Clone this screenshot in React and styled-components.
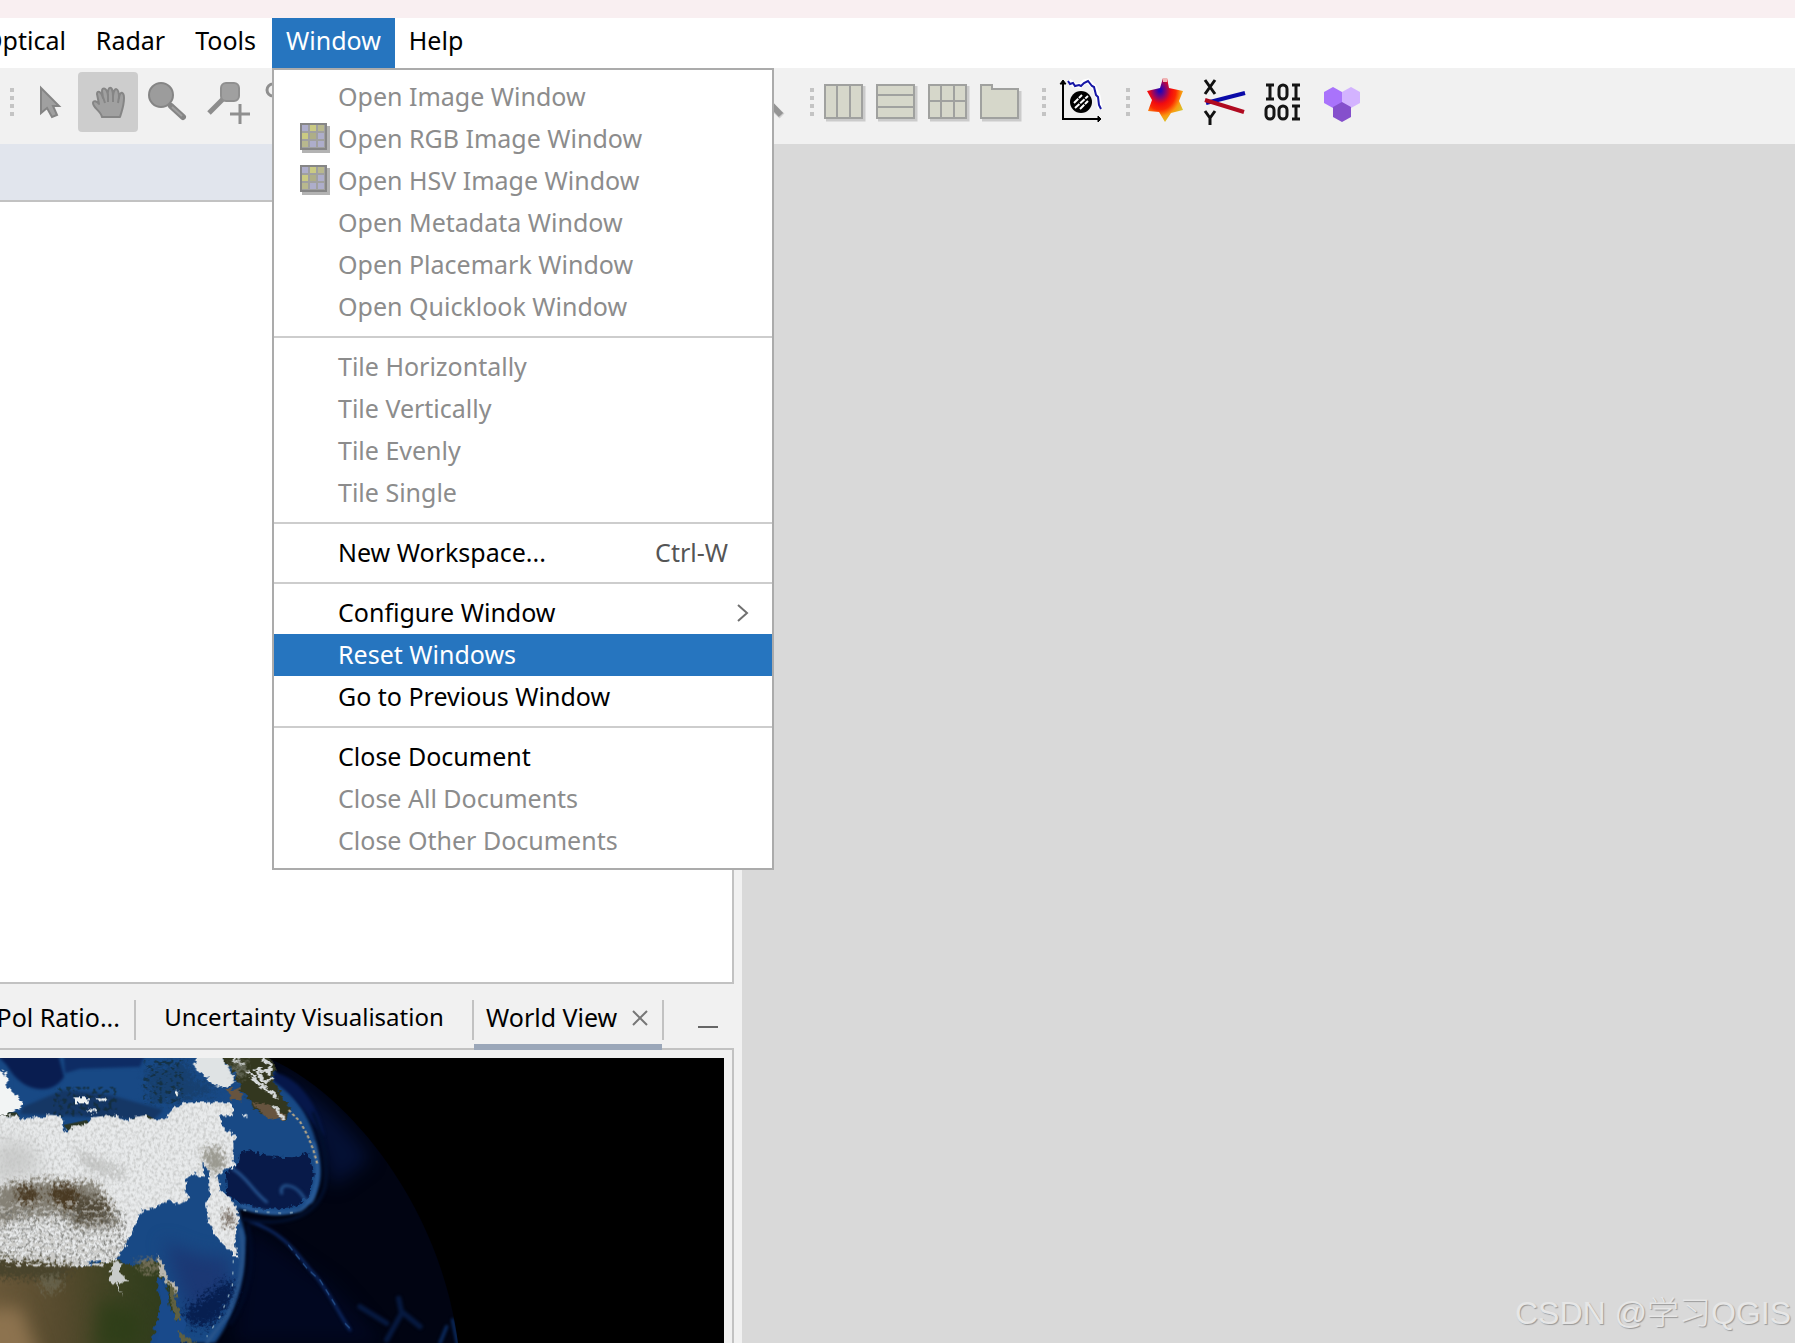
import React from 'react'
import styled, { createGlobalStyle } from 'styled-components'

const GlobalStyle = createGlobalStyle`
  * {
    box-sizing: border-box;
  }

  body {
    margin: 0;
    overflow-x: hidden;
    background: #d9d9d9;
    font-family: 'Noto Sans', 'Noto Sans CJK SC', sans-serif;
    font-size: 25px;
    color: #000000;
  }

  button {
    font: inherit;
    color: inherit;
    border: 0;
    padding: 0;
    background: none;
  }
`

const Page = styled.div`
  display: flex;
  flex-direction: column;
  min-height: 100vh;
`

const TitleStrip = styled.div`
  height: 18px;
  background: #f9eff1;
`

/* ---------- menu bar ---------- */

const MenuBar = styled.nav`
  display: flex;
  height: 50px;
  background: #ffffff;
`

const ScrolledMenus = styled.div`
  display: flex;
  justify-content: flex-end;
  gap: 2px;
  width: 272px;
  padding-right: 2px;
  overflow: hidden;
`

const MenuButton = styled.button`
  flex: none;
  height: 50px;
  padding: 0 14px 6px;
  line-height: 44px;
  background: ${props => props.$open ? '#2675bf' : 'transparent'};
  color: ${props => props.$open ? '#ffffff' : '#000000'};
`

const MenuHolder = styled.div`
  position: relative;
`

const Dropdown = styled.div`
  position: absolute;
  top: 100%;
  left: 0;
  z-index: 10;
  width: 502px;
  padding: 6px 0;
  background: #ffffff;
  border: 2px solid #ababab;
`

const MenuItem = styled.button`
  display: flex;
  align-items: center;
  width: 100%;
  height: 42px;
  padding: 0 22px 2px;
  line-height: 40px;
  text-align: left;
  color: ${props => props.$active ? '#ffffff' : props.disabled ? '#8c8c8c' : '#000000'};
  background: ${props => props.$active ? '#2675bf' : 'transparent'};
`

const ItemIcon = styled.span`
  display: flex;
  width: 42px;
`

const ItemLabel = styled.span`
  flex: 1;
`

const Shortcut = styled.span`
  padding-right: 22px;
  color: #555555;
`

const Separator = styled.hr`
  height: 2px;
  margin: 8px 0;
  border: 0;
  background: #cdcdcd;
`

/* ---------- tool bar ---------- */

const ToolBar = styled.div`
  display: flex;
  align-items: center;
  height: 76px;
  padding: 0 10px 8px;
  overflow: hidden;
  background: #f1f1f1;
`

const ToolGroup = styled.div`
  display: flex;
  flex: none;
  padding: 0 ${props => props.$gap}px 0 ${props => props.$lead || 4}px;
`

const ToolButton = styled.button`
  flex: none;
  width: ${props => props.$narrow ? 52 : 60}px;
  height: 60px;
  border-radius: 4px;
  background: ${props => props.$pressed ? '#cdcdcd' : 'transparent'};

  svg {
    display: block;
  }
`

const Grip = styled.span`
  flex: none;
  width: 4px;
  height: 28px;
  background: repeating-linear-gradient(#c4c4c4 0 4px, transparent 4px 8px);
`

/* ---------- work area ---------- */

const Workspace = styled.main`
  flex: 1;
  display: grid;
  grid-template-columns: 742fr 1053fr;
`

const LeftColumn = styled.div`
  display: flex;
  flex-direction: column;
  min-width: 0;
  padding-right: 8px;
  background: #f1f1f1;
`

const Explorer = styled.section`
  flex: 1;
  display: flex;
  flex-direction: column;
  background: #ffffff;
  border-right: 2px solid #c2c2c2;
  border-bottom: 2px solid #c2c2c2;
`

const ExplorerTabs = styled.div`
  height: 58px;
  background: #e1e5ed;
  border-bottom: 2px solid #c2c2c2;
`

const TabRow = styled.div`
  display: flex;
  align-items: flex-start;
  height: 64px;
  padding-top: 16px;
`

const ClippedTab = styled.div`
  display: flex;
  justify-content: flex-end;
  width: 136px;
  overflow: hidden;
  border-right: 2px solid #c2c2c2;
`

const Tab = styled.button`
  flex: none;
  height: 40px;
  padding: 0 ${props => props.$side || 14}px 6px;
  line-height: 34px;
  white-space: nowrap;
`

const MiddleTab = styled(Tab)`
  width: 338px;
  font-size: 24px;
  border-right: 2px solid #c2c2c2;
`

const ActiveTab = styled.div`
  display: flex;
  align-items: center;
  justify-content: space-between;
  width: 190px;
  height: 40px;
  padding-right: 14px;
  border-right: 2px solid #c2c2c2;
  position: relative;

  &::after {
    content: '';
    position: absolute;
    left: 0;
    right: 0;
    top: 44px;
    height: 6px;
    background: #9ba7b9;
  }
`

const IconButton = styled.button`
  height: 40px;
  margin-left: ${props => props.$left || 0}px;

  svg {
    display: block;
  }
`

const MapFrame = styled.section`
  padding: 8px 8px 0 0;
  border-top: 2px solid #c2c2c2;
  border-right: 2px solid #c2c2c2;
`

const Globe = styled.svg`
  display: block;
  width: 100%;
  height: 285px;
  background: #000000;

  filter {
    color-interpolation-filters: sRGB;
  }
`

const Desktop = styled.div`
  display: flex;
  align-items: flex-end;
  justify-content: flex-end;
  padding: 0 4px 6px;
  background: #d9d9d9;
`

const Watermark = styled.span`
  font-family: 'Liberation Sans', 'Noto Sans CJK SC', sans-serif;
  font-size: 32px;
  font-weight: 300;
  line-height: 48px;
  white-space: nowrap;
  color: #e6e6e6;
  text-shadow: 1px 1px 1px #999999;
`

/* ---------- icons ---------- */

const Icon = ({ wide = 60, children }) => (
  <svg width={wide} height="60" viewBox={`0 0 ${wide} 60`} fill="none" aria-hidden="true">
    {children}
  </svg>
)

const ArrowIcon = () => (
  <Icon>
    <path d="M23 16V41L29 36L34 45L39 43L35 34H41Z" fill="#a0a0a0" stroke="#858585" strokeWidth="2" />
  </Icon>
)

const HandIcon = () => (
  <Icon>
    <path
      d="M24 45C23 39 15 36 15 31C15 28 19 29 21 32L19 22C19 18 23 19 25 26L24 19C24 15 29 15 30 24C29 13 35 13 35 24C36 14 41 15 41 26C42 18 46 20 46 26C46 34 44 38 42 45Z"
      fill="#a0a0a0" stroke="#858585" strokeWidth="2" strokeLinejoin="round"
    />
    <path d="M25 25L27 31M30 22V30M35 22V30M41 25L40 31" stroke="#858585" strokeWidth="2" />
  </Icon>
)

const ZoomIcon = () => (
  <Icon>
    <path d="M33 34L45 45" stroke="#858585" strokeWidth="6" strokeLinecap="round" />
    <path d="M34 35L44 44" stroke="#a0a0a0" strokeWidth="2" />
    <circle cx="23" cy="23" r="12" fill="#9c9c9c" stroke="#858585" strokeWidth="2" />
  </Icon>
)

const PinIcon = () => (
  <Icon>
    <path d="M11 41L25 27" stroke="#8d8d8d" strokeWidth="5" />
    <rect x="23" y="11" width="18" height="18" rx="5" fill="#a0a0a0" stroke="#8f8f8f" strokeWidth="2" />
    <path d="M32 42H52M42 32V52" stroke="#8f8f8f" strokeWidth="3" />
  </Icon>
)

const LineIcon = () => (
  <Icon>
    <circle cx="15" cy="18" r="6" stroke="#8f8f8f" strokeWidth="3" />
    <path d="M20 23L46 44" stroke="#8f8f8f" strokeWidth="3" />
  </Icon>
)

const PencilIcon = () => (
  <Icon>
    <path d="M24 25L44 44" stroke="#d0d0d0" strokeWidth="7" />
    <path d="M24 23L43 43" stroke="#949494" strokeWidth="6" />
  </Icon>
)

const TileIcon = ({ lines }) => (
  <Icon wide={52}>
    <path d="M8 48H46V14" stroke="#cbcbcb" strokeWidth="3" />
    <rect x="7" y="13" width="37" height="33" fill="#d6d7ca" stroke="#a0a19f" strokeWidth="2" />
    <path d={lines} stroke="#a0a19f" strokeWidth="2" />
  </Icon>
)

const FolderIcon = () => (
  <Icon wide={52}>
    <path d="M8 48H46V19" stroke="#cbcbcb" strokeWidth="3" />
    <path d="M7 46V13H18V17H44V46Z" fill="#d6d7ca" stroke="#a0a19f" strokeWidth="2" />
  </Icon>
)

const SpectrumIcon = () => (
  <Icon>
    <path d="M17 9L22 13L28 14L32 10L36 9L42 15L46 24L48 37" stroke="#ffffff" strokeWidth="5" />
    <path d="M16 9L18 12L21 11L23 14L27 13L29 14L32 11L36 9L40 14L42 15L44 23L46 25L47 33L49 37" stroke="#1616a5" strokeWidth="2" />
    <path d="M11 9V47H49" stroke="#000000" strokeWidth="2" />
    <path d="M8 12L11 8L14 12ZM46 44L49 47L46 50Z" fill="#000000" stroke="#000000" />
    <circle cx="29" cy="30" r="11" fill="#000000" />
    <path d="M22 31L30 23M23 36L36 24M28 37L36 29" stroke="#ffffff" strokeWidth="2" strokeDasharray="6 1" />
  </Icon>
)

const StarIcon = () => (
  <Icon>
    <defs>
      <radialGradient id="starHeat" cx="0.36" cy="0.28" r="0.85">
        <stop offset="0.04" stopColor="#2404b4" />
        <stop offset="0.2" stopColor="#8a066c" />
        <stop offset="0.36" stopColor="#f00a10" />
        <stop offset="0.52" stopColor="#fb2a02" />
        <stop offset="0.7" stopColor="#f99a10" />
        <stop offset="0.88" stopColor="#d9c32a" />
      </radialGradient>
    </defs>
    <path d="M27 6H31L33 16L47 19L43 29L47 38L35 41L29 50L23 40L12 39L16 28L11 19L24 16Z" fill="url(#starHeat)" />
    <path d="M27 6H31V10H27Z" fill="#efb4b4" />
  </Icon>
)

const ScatterIcon = () => (
  <Icon>
    <path d="M10 31L49 21" stroke="#0a0aa8" strokeWidth="4" />
    <path d="M9 28L48 40" stroke="#b00a20" strokeWidth="4" />
    <path d="M9 8L19 22M19 8L9 22M9 39L14 46L19 39M14 45V53" stroke="#111111" strokeWidth="3" />
  </Icon>
)

const BinaryIcon = () => (
  <Icon>
    <path
      d="M10 13H18M14 13V27M10 27H18M36 13H44M40 13V27M36 27H44M36 34H44M40 34V47M36 47H44"
      stroke="#151515" strokeWidth="3"
    />
    <rect x="23" y="13" width="8" height="14" rx="4" stroke="#151515" strokeWidth="3" />
    <rect x="10" y="34" width="8" height="13" rx="4" stroke="#151515" strokeWidth="3" />
    <rect x="23" y="34" width="8" height="13" rx="4" stroke="#151515" strokeWidth="3" />
  </Icon>
)

const HexIcon = () => (
  <Icon>
    <path d="M17 15L26 20V31L17 36L8 31V20Z" fill="#a973fb" />
    <path d="M35 15L44 20V31L35 36L26 31V20Z" fill="#d3b3ff" />
    <path d="M26 30L35 35V45L26 50L17 45V35Z" fill="#8550cc" />
  </Icon>
)

const cellColors = ['#aeaecb', '#caca83', '#b8b88e', '#caca83', '#aeae87', '#aeaecb', '#b8b88e', '#aeaecb', '#aeaecb']

const GridIcon = () => (
  <svg width="34" height="32" viewBox="0 0 34 32" aria-hidden="true">
    <rect x="6" y="4" width="28" height="27" fill="#b3b3b3" />
    <rect x="5" y="2" width="25" height="25" fill="#a0a0a0" stroke="#868686" strokeWidth="2" />
    {cellColors.map((color, i) => (
      <rect key={i} x={6 + (i % 3) * 8} y={3 + Math.floor(i / 3) * 8} width="6" height="6" fill={color} />
    ))}
  </svg>
)

const leftTools = [
  { name: 'Select', icon: <ArrowIcon /> },
  { name: 'Pan', icon: <HandIcon />, pressed: true },
  { name: 'Zoom', icon: <ZoomIcon /> },
  { name: 'Add pin', icon: <PinIcon /> },
  { name: 'Draw line', icon: <LineIcon /> },
  { name: 'Draw polyline' },
  { name: 'Draw rectangle' },
  { name: 'Draw polygon' },
  { name: 'Draw ellipse' },
  { name: 'Range finder' },
  { name: 'Magic wand' },
  { name: 'Create mask' },
  { name: 'Pencil', icon: <PencilIcon /> },
]

const tileTools = [
  { name: 'Tile vertically', icon: <TileIcon lines="M19 13V46M32 13V46" /> },
  { name: 'Tile horizontally', icon: <TileIcon lines="M7 23H44M7 35H44" /> },
  { name: 'Tile evenly', icon: <TileIcon lines="M19 13V46M32 13V46M7 29H44" /> },
  { name: 'Tile single', icon: <FolderIcon /> },
]

const plotTools = [
  { name: 'Statistics', icon: <StarIcon /> },
  { name: 'Scatter plot', icon: <ScatterIcon /> },
  { name: 'Pixel values', icon: <BinaryIcon /> },
  { name: 'Clusters', icon: <HexIcon /> },
]

const menuGroups = [
  [
    { label: 'Open Image Window', disabled: true },
    { label: 'Open RGB Image Window', disabled: true, grid: true },
    { label: 'Open HSV Image Window', disabled: true, grid: true },
    { label: 'Open Metadata Window', disabled: true },
    { label: 'Open Placemark Window', disabled: true },
    { label: 'Open Quicklook Window', disabled: true },
  ],
  [
    { label: 'Tile Horizontally', disabled: true },
    { label: 'Tile Vertically', disabled: true },
    { label: 'Tile Evenly', disabled: true },
    { label: 'Tile Single', disabled: true },
  ],
  [{ label: 'New Workspace...', shortcut: 'Ctrl-W' }],
  [
    { label: 'Configure Window', submenu: true },
    { label: 'Reset Windows', active: true },
    { label: 'Go to Previous Window' },
  ],
  [
    { label: 'Close Document' },
    { label: 'Close All Documents', disabled: true },
    { label: 'Close Other Documents', disabled: true },
  ],
]

const Tools = ({ items, narrow }) => items.map(tool => (
  <ToolButton key={tool.name} aria-label={tool.name} $narrow={narrow} $pressed={tool.pressed}>
    {tool.icon}
  </ToolButton>
))

const WindowMenu = () => (
  <Dropdown role="menu">
    {menuGroups.map((group, i) => (
      <React.Fragment key={i}>
        {i > 0 && <Separator />}
        {group.map(item => (
          <MenuItem key={item.label} role="menuitem" disabled={item.disabled} $active={item.active}>
            <ItemIcon>{item.grid && <GridIcon />}</ItemIcon>
            <ItemLabel>{item.label}</ItemLabel>
            {item.shortcut && <Shortcut>{item.shortcut}</Shortcut>}
            {item.submenu && (
              <svg width="14" height="20" viewBox="0 0 14 20" fill="none" aria-hidden="true">
                <path d="M2 3L11 11L2 19" stroke="#707070" strokeWidth="2" />
              </svg>
            )}
          </MenuItem>
        ))}
      </React.Fragment>
    ))}
  </Dropdown>
)

const SIBERIA = 'M-40 222L45 228L70 238L100 230L130 238L140 224L175 226L190 240L188 264L208 276L215 255L245 258L268 244L275 232L330 226L365 232L385 244L400 232L435 226L462 244L500 230L520 206L560 188L640 186L690 190L706 224L660 230L668 262L712 292L700 302L702 385L675 384L652 410L662 450L690 472L712 508L718 545L704 565L712 652L690 636L650 590L625 548L618 490L630 470L626 392L606 368L612 410L596 408L585 398L560 412L556 462L574 474L540 494L510 482L470 500L422 516L408 548L390 590L362 640L340 668L300 660L240 680L-40 690Z'

const WorldMap = () => (
  <Globe viewBox="0 54 2172 855" preserveAspectRatio="xMinYMin slice" role="img" aria-label="World map">
    <defs>
      <filter id="coast" x="-5%" y="-5%" width="110%" height="110%">
        <feTurbulence type="fractalNoise" baseFrequency="0.07" numOctaves="2" seed="4" />
        <feDisplacementMap in="SourceGraphic" scale="24" xChannelSelector="R" yChannelSelector="G" />
      </filter>
      <filter id="ragged" x="-20%" y="-20%" width="140%" height="140%">
        <feGaussianBlur stdDeviation="9" result="smooth" />
        <feTurbulence type="fractalNoise" baseFrequency="0.1" numOctaves="3" seed="9" result="n" />
        <feDisplacementMap in="smooth" in2="n" scale="70" xChannelSelector="R" yChannelSelector="G" />
      </filter>
      <filter id="soft" x="-40%" y="-40%" width="180%" height="180%">
        <feGaussianBlur stdDeviation="26" />
      </filter>
      <filter id="glow" x="-30%" y="-30%" width="160%" height="160%">
        <feGaussianBlur stdDeviation="5" />
      </filter>
      {/* grey grain over the snow */}
      <filter id="speckle" x="0" y="0" width="100%" height="100%">
        <feTurbulence type="fractalNoise" baseFrequency="0.11" numOctaves="3" seed="12" />
        <feColorMatrix values="0 0 0 0 0.42  0 0 0 0 0.42  0 0 0 0 0.4  2 0 0 0 -0.85" />
        <feComposite in2="SourceGraphic" operator="in" />
      </filter>
      <filter id="snowBits" x="0" y="0" width="100%" height="100%">
        <feTurbulence type="fractalNoise" baseFrequency="0.06 0.1" numOctaves="4" seed="31" />
        <feColorMatrix values="0 0 0 0 0.8  0 0 0 0 0.8  0 0 0 0 0.79  0 7 0 0 -3.6" />
        <feComposite in2="SourceGraphic" operator="in" />
      </filter>
      <filter id="darkBits" x="0" y="0" width="100%" height="100%">
        <feTurbulence type="fractalNoise" baseFrequency="0.08" numOctaves="3" seed="21" />
        <feColorMatrix values="0 0 0 0 0.08  0 0 0 0 0.17  0 0 0 0 0.2  0 8 0 0 -4.3" />
        <feComposite in2="SourceGraphic" operator="in" />
      </filter>
      <clipPath id="disc">
        <path d="M0 54H805C960 122 1090 260 1180 395C1290 560 1352 740 1374 909H0Z" />
      </clipPath>
      <clipPath id="siberiaClip">
        <path d={SIBERIA} />
      </clipPath>
      <linearGradient id="desert" x1="0" y1="0" x2="1" y2="0">
        <stop offset="0" stopColor="#6d5a3b" />
        <stop offset="0.4" stopColor="#554a2d" />
        <stop offset="0.75" stopColor="#37401f" />
        <stop offset="1" stopColor="#2d3b1b" />
      </linearGradient>
    </defs>

    <g clipPath="url(#disc)">
      <rect y="54" width="1400" height="855" fill="#010412" />
      <path d="M820 80C940 160 1060 270 1110 360L1000 440L950 300Z" fill="#041034" filter="url(#soft)" />
      <path d="M740 560L1000 740L1150 909H700Z" fill="#010720" filter="url(#soft)" />

      {/* shelf seas */}
      <path
        d="M0 54H800L840 120C905 185 950 270 960 370C970 450 938 506 860 522C800 528 750 515 715 505L738 590L732 680C722 760 690 850 645 909H0Z"
        fill="#184985" filter="url(#glow)"
      />
      <rect y="54" width="790" height="40" fill="#184985" />
      <rect y="54" width="40" height="855" fill="#184985" />
      <path d="M818 95C890 110 950 180 975 290L940 250C900 190 860 150 820 125Z" fill="#06174a" filter="url(#glow)" />
      <path d="M-20 34H172L192 110C160 165 70 165 20 75Z" fill="#091d50" filter="url(#glow)" />
      <path d="M190 34H440L420 80L240 86L195 100Z" fill="#0e2c64" filter="url(#glow)" />
      <path d="M440 90L560 60L580 120L660 150L540 184L450 190Z" fill="#17406f" filter="url(#ragged)" />
      <path d="M70 200L190 150L330 165L490 210L460 240L60 222Z" fill="#153765" filter="url(#glow)" />
      <path
        d="M718 338L750 328L780 344L830 350L880 352L925 340L942 400L930 470L880 502L790 508L735 495L682 465L678 400L712 380Z"
        fill="#081a49" filter="url(#coast)"
      />
      <path d="M490 600C560 640 640 660 690 650L690 750L600 840L560 800L530 720Z" fill="#1b3874" filter="url(#soft)" />
      <path d="M552 812L690 716L712 760L650 842L606 862L560 850Z" fill="#071f50" filter="url(#ragged)" />
      <path d="M470 700L484 780L450 909H540L560 850L520 790Z" fill="#194a8b" />
      <g opacity="0.7">
        <rect x="160" y="140" width="190" height="90" filter="url(#darkBits)" />
        <rect x="430" y="60" width="120" height="130" filter="url(#darkBits)" />
      </g>

      {/* ridges */}
      <g fill="none" strokeLinecap="round" filter="url(#glow)">
        <path d="M700 388C740 410 755 450 800 486" stroke="#2a5c9a" strokeWidth="8" />
        <path d="M845 460C835 430 880 425 910 470C925 495 938 498 945 450" stroke="#24528c" strokeWidth="9" />
        <path d="M940 310C966 400 950 480 900 510C850 524 780 520 725 498" stroke="#2b5d9a" strokeWidth="10" />
        <path d="M750 545C860 580 895 650 940 700C985 750 1010 810 1050 870" stroke="#0c2862" strokeWidth="9" />
        <path d="M1080 800L1160 850M1196 775L1205 820L1160 900M1205 815L1260 860" stroke="#06193f" strokeWidth="16" />
        <path d="M1340 860L1320 909M1358 840L1372 909" stroke="#0b2c62" strokeWidth="10" />
        <path d="M722 570C740 660 715 760 680 830L620 909" stroke="#2b568c" strokeWidth="10" />
        <path d="M744 560C767 660 747 770 692 850" stroke="#000a25" strokeWidth="12" />
        <path d="M730 538C820 556 945 550 975 440C987 360 970 290 940 220" stroke="#02102e" strokeWidth="10" />
      </g>
      <path d="M700 660L697 740L660 830L620 890M730 510L780 515L850 520L900 516" stroke="#87a5ba" strokeWidth="4" strokeDasharray="9 26" fill="none" />
      <path d="M865 615L925 690L960 720L1012 805M1035 850L1055 870" stroke="#254f88" strokeWidth="4" strokeDasharray="20 15" fill="none" />

      {/* snow covered north */}
      <path d="M395 238L440 224L475 244L430 250ZM0 214L50 218L60 234L0 230ZM190 255L260 240L270 252L208 275Z" fill="#2c3726" />
      <path d={SIBERIA} fill="#e9ebec" filter="url(#coast)" />
      <g clipPath="url(#siberiaClip)">
        <rect y="180" width="720" height="480" filter="url(#speckle)" opacity="0.35" />
        <path d="M-20 300L90 310L130 390L20 420L-20 460Z" fill="#c4c5c4" filter="url(#soft)" opacity="0.8" />
        <path d="M215 320L280 350L380 390L370 415L260 390Z" fill="#b9bab8" filter="url(#ragged)" opacity="0.7" />
        <path d="M30 430L150 420L290 430L335 500L360 560L230 565L180 525L60 535L-20 560V460Z" fill="#858176" filter="url(#ragged)" />
        <path d="M50 450C90 430 130 450 110 485C90 500 50 490 50 450ZM150 450C200 420 250 450 240 490C220 520 150 500 150 450Z" fill="#493922" filter="url(#ragged)" />
        <path d="M230 470L320 480L330 540L220 545Z" fill="#514938" filter="url(#ragged)" />
        <rect y="510" width="380" height="170" filter="url(#speckle)" />
        <rect y="480" width="340" height="190" filter="url(#snowBits)" opacity="0.6" />
        <path d="M605 330L650 320L680 360L655 405L625 390Z" fill="#9a9990" filter="url(#ragged)" />
        <path d="M668 510L690 520L705 560L680 560Z" fill="#57483a" filter="url(#ragged)" />
      </g>
      <path d="M-30 80L18 100L20 130L30 150L65 180L60 206L25 222L-30 222Z" fill="#f2f4f4" filter="url(#coast)" />
      <path d="M220 172H270L265 190H225ZM285 174L330 178L300 184ZM255 206L290 212L275 220ZM524 150L540 150L536 166L526 164ZM728 222L744 228L732 234Z" fill="#eef2f2" filter="url(#coast)" />

      {/* steppe and forest in the south */}
      <path
        d="M-40 675L80 665L130 680L240 680L320 665L350 658L400 680L440 660L470 665L490 690L520 760L540 830L530 845L510 800L494 715H468L482 775L470 850L440 940H-40Z"
        fill="url(#desert)" filter="url(#coast)"
      />
      <path d="M300 780C350 790 400 800 430 850L400 930H280Z" fill="#2c3e17" filter="url(#soft)" opacity="0.8" />
      <path d="M-60 810L60 800L120 960H-60Z" fill="#8d734f" filter="url(#soft)" />
      <path d="M-20 650L130 665L230 672L180 720L-20 710Z" fill="#49442c" filter="url(#ragged)" />
      <rect y="590" width="350" height="90" filter="url(#snowBits)" />
      <path d="M115 715L170 700L190 740L140 765Z" fill="#71705d" filter="url(#ragged)" opacity="0.6" />
      <path d="M345 660L368 670L362 700L385 720L350 732L372 770L350 740L325 715Z" fill="#c9ccca" filter="url(#coast)" />
      <path d="M405 665L460 655L480 690L440 700Z" fill="#77715b" filter="url(#ragged)" />
      <path d="M470 640L492 680L505 715L535 745L530 765L500 735L478 690Z" fill="#b9b6ae" filter="url(#coast)" />
      <path d="M500 720L530 750L528 790L545 842L525 840L512 780ZM535 875L590 909H545Z" fill="#5f6041" filter="url(#coast)" />

      {/* Alaska and the island arc */}
      <path d="M650 34H800L830 90L812 112L870 205L860 240L810 232L760 205L750 180L720 150L710 110Z" fill="#33371f" filter="url(#coast)" />
      <path d="M582 66L600 34H650L690 90L706 125L680 142L640 138L625 115L590 90Z" fill="#dfe3e4" filter="url(#coast)" />
      <path d="M680 148L720 145L725 178L700 180ZM755 185L790 190L860 225L850 240L800 232Z" fill="#67543f" filter="url(#coast)" />
      <path d="M740 90L775 130L830 170M770 95L800 130L815 112M785 60L815 75L808 96L765 88M820 195L850 235M700 54L730 72" stroke="#d6dadb" strokeWidth="9" fill="none" filter="url(#coast)" />
      <path d="M690 70L740 64L730 120Z" fill="#8d9087" filter="url(#ragged)" opacity="0.7" />
      <path d="M866 210L900 245L922 285L940 330L952 372" stroke="#b9a888" strokeWidth="6" strokeDasharray="9 7" fill="none" />
    </g>
  </Globe>
)

const App = () => {
  return (
    <>
      <GlobalStyle />
      <Page>
        <TitleStrip />
        <MenuBar>
          <ScrolledMenus>
            <MenuButton>Optical</MenuButton>
            <MenuButton>Radar</MenuButton>
            <MenuButton>Tools</MenuButton>
          </ScrolledMenus>
          <MenuHolder>
            <MenuButton $open aria-expanded="true">Window</MenuButton>
            <WindowMenu />
          </MenuHolder>
          <MenuButton>Help</MenuButton>
        </MenuBar>

        <ToolBar>
          <Grip />
          <ToolGroup $gap={12}><Tools items={leftTools} /></ToolGroup>
          <Grip />
          <ToolGroup $gap={16}><Tools items={tileTools} narrow /></ToolGroup>
          <Grip />
          <ToolGroup $gap={14} $lead={6}>
            <ToolButton aria-label="Spectrum"><SpectrumIcon /></ToolButton>
          </ToolGroup>
          <Grip />
          <ToolGroup $gap={0} $lead={6}><Tools items={plotTools} /></ToolGroup>
        </ToolBar>

        <Workspace>
          <LeftColumn>
            <Explorer>
              <ExplorerTabs />
            </Explorer>
            <TabRow>
              <ClippedTab>
                <Tab>Pol Ratio...</Tab>
              </ClippedTab>
              <MiddleTab>Uncertainty Visualisation</MiddleTab>
              <ActiveTab>
                <Tab $side={12}>World View</Tab>
                <IconButton aria-label="Close tab">
                  <svg width="16" height="40" viewBox="0 0 16 40" aria-hidden="true">
                    <path d="M1 11L15 25M15 11L1 25" stroke="#777777" strokeWidth="2" />
                  </svg>
                </IconButton>
              </ActiveTab>
              <IconButton $left={34} aria-label="Minimize">
                <svg width="20" height="40" viewBox="0 0 20 40" aria-hidden="true">
                  <path d="M0 27H20" stroke="#666666" strokeWidth="2" />
                </svg>
              </IconButton>
            </TabRow>
            <MapFrame>
              <WorldMap />
            </MapFrame>
          </LeftColumn>
          <Desktop>
            <Watermark>CSDN @学习QGIS</Watermark>
          </Desktop>
        </Workspace>
      </Page>
    </>
  )
}

export default App
